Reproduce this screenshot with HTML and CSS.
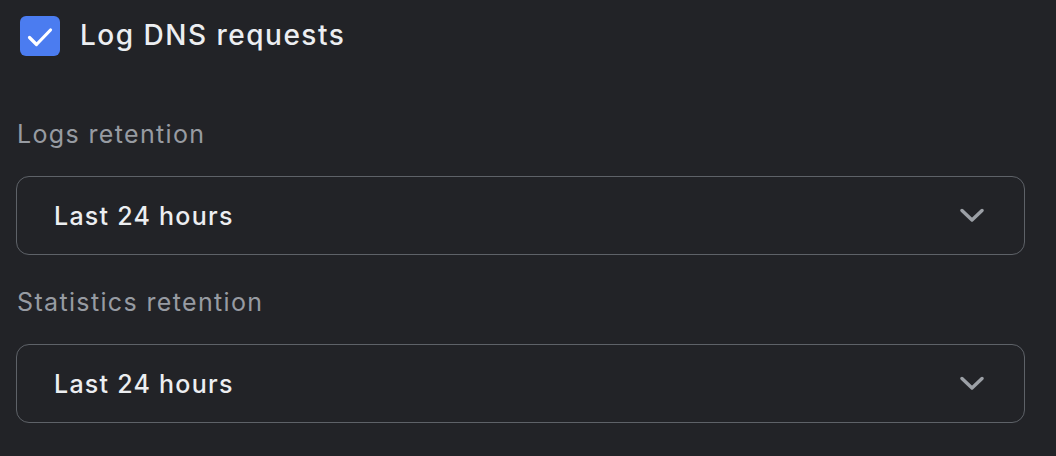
FILE: index.html
```html
<!DOCTYPE html>
<html>
<head>
<meta charset="utf-8">
<link rel="stylesheet" href="styles.css">
</head>
<body>
<div class="panel">
  <label class="check-row">
    <span class="checkbox">
      <svg width="40" height="40" viewBox="0 0 40 40"><path d="M9.5 21.5 L16.5 28.5 L30.5 14" fill="none" stroke="#ffffff" stroke-width="3.2" stroke-linecap="round" stroke-linejoin="round"/></svg>
    </span>
    <span class="check-text">Log DNS requests</span>
  </label>

  <div class="field first">
    <div class="field-label">Logs retention</div>
    <div class="select">
      <span class="select-value">Last 24 hours</span>
      <svg class="chev" width="24" height="24" viewBox="0 0 24 24"><path d="M2 6.5 L12 16 L22 6.5" fill="none" stroke="#9ca0a6" stroke-width="3.4" stroke-linecap="round" stroke-linejoin="round"/></svg>
    </div>
  </div>

  <div class="field">
    <div class="field-label">Statistics retention</div>
    <div class="select">
      <span class="select-value">Last 24 hours</span>
      <svg class="chev" width="24" height="24" viewBox="0 0 24 24"><path d="M2 6.5 L12 16 L22 6.5" fill="none" stroke="#9ca0a6" stroke-width="3.4" stroke-linecap="round" stroke-linejoin="round"/></svg>
    </div>
  </div>
</div>
</body>
</html>
```

FILE: styles.css
```css
html, body {
  margin: 0;
  padding: 0;
  background: #222327;
}
body {
  font-family: Inter, "Noto Sans", sans-serif;
  color: #eceef1;
}
.panel {
  padding: 16px 31px 0 16px;
}
.check-row {
  display: flex;
  align-items: center;
  height: 40px;
  padding-left: 4px;
}
.checkbox {
  width: 40px;
  height: 40px;
  border-radius: 6px;
  background: #4b7cf0;
  display: flex;
  flex: none;
}
.check-text {
  margin-left: 20px;
  font-size: 28px;
  letter-spacing: 1.5px;
  line-height: 40px;
  font-weight: 500;
  color: #eceef1;
  position: relative;
  top: -1px;
}
.field {
  margin-top: 31px;
}
.field.first {
  margin-top: 62px;
}
.field-label {
  font-size: 25px;
  letter-spacing: 1.35px;
  line-height: 32px;
  color: #979ba2;
  padding-left: 1px;
}
.select {
  margin-top: 26px;
  height: 79px;
  box-sizing: border-box;
  border: 1.5px solid #5e6268;
  border-radius: 13px;
  display: flex;
  align-items: center;
  padding: 0 40px 0 37px;
}
.select-value {
  flex: 1;
  font-size: 25px;
  letter-spacing: 1.25px;
  font-weight: 500;
  color: #eceef1;
}
.chev {
  flex: none;
}
```
